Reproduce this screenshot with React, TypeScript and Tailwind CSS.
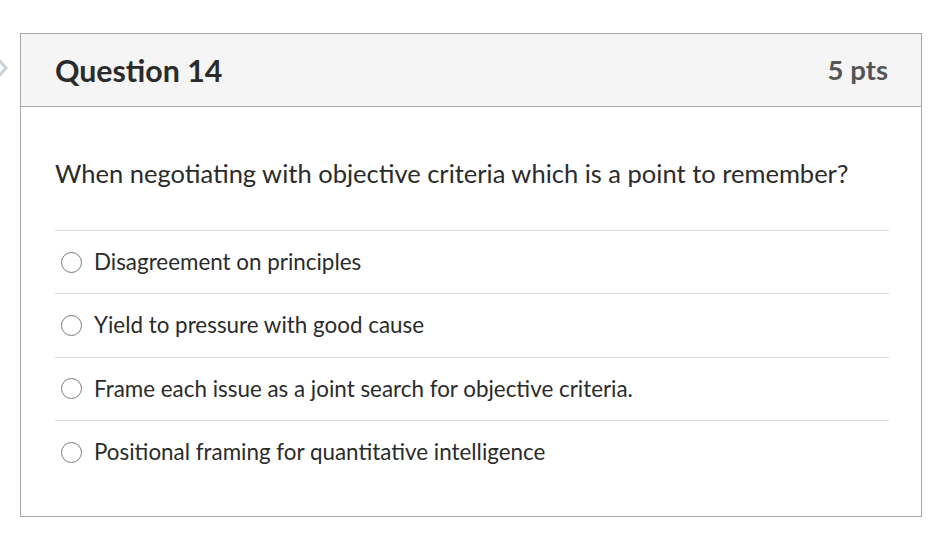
import React from "react";

const options = [
  "Disagreement on principles",
  "Yield to pressure with good cause",
  "Frame each issue as a joint search for objective criteria.",
  "Positional framing for quantitative intelligence",
];

export default function App() {
  return (
    <div
      className="relative w-[942px] h-[546px] bg-white overflow-hidden"
      style={{ fontFamily: "Lato, 'Open Sans', sans-serif" }}
    >
      <svg className="absolute left-0 top-[56px]" width="10" height="24" viewBox="0 0 10 24">
        <path d="M-2 3 L6 12 L-2 21" fill="none" stroke="#c9d3da" strokeWidth="3" />
      </svg>
      <div className="pt-[33px] pl-[20px] pr-[20px]">
        <div className="border border-[#a8a8a8] h-[484px]">
          <div className="h-[73px] bg-[#f5f5f5] border-b border-[#a8a8a8] flex items-center justify-between pl-[34px] pr-[33px]">
            <div className="text-[30.3px] font-bold text-[#2b2b2b] leading-none">Question 14</div>
            <div className="text-[27.5px] font-bold text-[#555555] leading-none">5 pts</div>
          </div>
          <div className="pl-[34px] pr-[32px]">
            <div className="pt-[50px] text-[25.5px] text-[#2b2b2b] leading-[32px]">
              When negotiating with objective criteria which is a point to remember?
            </div>
            <div className="mt-[41px]">
              {options.map((o) => (
                <div key={o} className="h-[63.4px] border-t border-[#dcdcdc] flex items-center pl-[6px]">
                  <div className="w-[21px] h-[21px] rounded-full border-[1.5px] border-[#7a7a7a] bg-white shrink-0" />
                  <div className="ml-[12px] text-[22.4px] text-[#2b2b2b] leading-none">{o}</div>
                </div>
              ))}
            </div>
          </div>
        </div>
      </div>
    </div>
  );
}
